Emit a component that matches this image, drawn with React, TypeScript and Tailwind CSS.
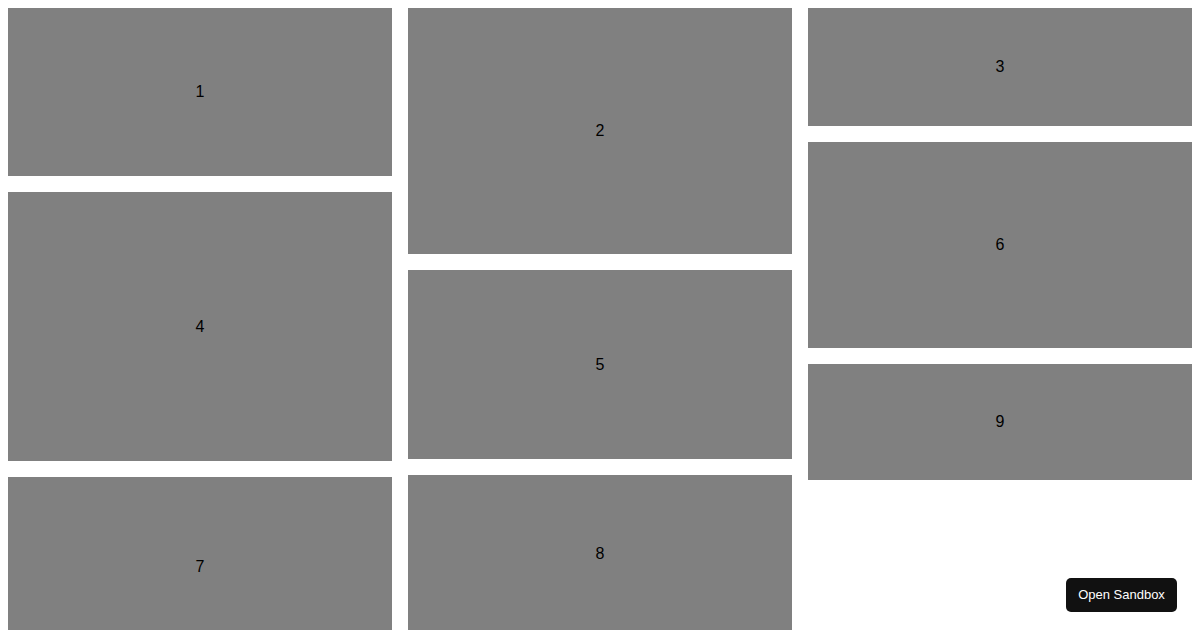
const columns: { id: number; h: number }[][] = [
  [
    { id: 1, h: 168 },
    { id: 4, h: 269 },
    { id: 7, h: 180 },
  ],
  [
    { id: 2, h: 246 },
    { id: 5, h: 189 },
    { id: 8, h: 158 },
  ],
  [
    { id: 3, h: 118 },
    { id: 6, h: 206 },
    { id: 9, h: 116 },
  ],
];

export default function App() {
  return (
    <div
      className="h-[630px] w-[1200px] overflow-hidden bg-white p-2"
      style={{ fontFamily: '"Liberation Sans", Arial, sans-serif' }}
    >
      <div className="flex gap-4">
        {columns.map((col, i) => (
          <div key={i} className="flex flex-1 flex-col gap-4">
            {col.map((item) => (
              <div
                key={item.id}
                className="flex items-center justify-center bg-[#808080] text-base text-black"
                style={{ height: item.h }}
              >
                {item.id}
              </div>
            ))}
          </div>
        ))}
      </div>
      <button className="fixed bottom-[18px] right-[23px] h-[34px] w-[111px] rounded-[5px] bg-[#111111] text-[13px] text-white">
        Open Sandbox
      </button>
    </div>
  );
}
